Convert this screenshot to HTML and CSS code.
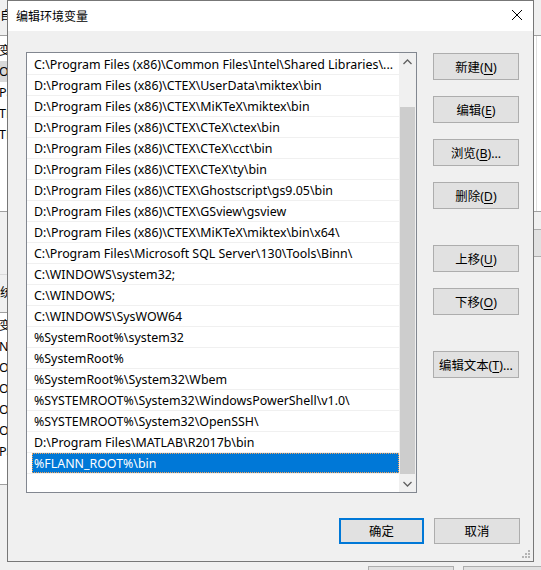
FILE: index.html
```html
<!DOCTYPE html>
<html lang="zh-CN">

<head>
  <meta charset="UTF-8">
  <title>编辑环境变量</title>
  <link rel="stylesheet" href="styles.css">
</head>

<body>
  <!-- window underneath the dialog -->
  <div class="behind">
    <div class="behind-left">
      <div class="bl-head">自</div>
      <div class="bl-list top">
        <div>变</div>
        <div class="hl">Or</div>
        <div>Pa</div>
        <div>TE</div>
        <div>TN</div>
      </div>
      <div class="bl-head second">统</div>
      <div class="bl-list bottom">
        <div>变</div>
        <div>N</div>
        <div>O</div>
        <div>O</div>
        <div>O</div>
        <div>O</div>
        <div>Pa</div>
      </div>
    </div>
    <div class="behind-right">
      <div class="br-top"></div>
      <div class="br-box"></div>
    </div>
    <div class="behind-btn b1"></div>
    <div class="behind-btn b2"></div>
  </div>

  <div class="dialog">
    <div class="titlebar">
      <span class="title">编辑环境变量</span>
      <svg class="close" width="12" height="12" viewBox="0 0 12 12">
        <path d="M1 1L11 11M11 1L1 11" stroke="#000" stroke-width="1" fill="none" />
      </svg>
    </div>

    <div class="content">
      <div class="listbox">
        <div class="rows">
          <div class="row"><span>C:\Program Files (x86)\Common Files\Intel\Shared Libraries\...</span></div>
          <div class="row"><span>D:\Program Files (x86)\CTEX\UserData\miktex\bin</span></div>
          <div class="row"><span>D:\Program Files (x86)\CTEX\MiKTeX\miktex\bin</span></div>
          <div class="row"><span>D:\Program Files (x86)\CTEX\CTeX\ctex\bin</span></div>
          <div class="row"><span>D:\Program Files (x86)\CTEX\CTeX\cct\bin</span></div>
          <div class="row"><span>D:\Program Files (x86)\CTEX\CTeX\ty\bin</span></div>
          <div class="row"><span>D:\Program Files (x86)\CTEX\Ghostscript\gs9.05\bin</span></div>
          <div class="row"><span>D:\Program Files (x86)\CTEX\GSview\gsview</span></div>
          <div class="row"><span>D:\Program Files (x86)\CTEX\MiKTeX\miktex\bin\x64\</span></div>
          <div class="row"><span>C:\Program Files\Microsoft SQL Server\130\Tools\Binn\</span></div>
          <div class="row"><span>C:\WINDOWS\system32;</span></div>
          <div class="row"><span>C:\WINDOWS;</span></div>
          <div class="row"><span>C:\WINDOWS\SysWOW64</span></div>
          <div class="row"><span>%SystemRoot%\system32</span></div>
          <div class="row"><span>%SystemRoot%</span></div>
          <div class="row"><span>%SystemRoot%\System32\Wbem</span></div>
          <div class="row"><span>%SYSTEMROOT%\System32\WindowsPowerShell\v1.0\</span></div>
          <div class="row"><span>%SYSTEMROOT%\System32\OpenSSH\</span></div>
          <div class="row"><span>D:\Program Files\MATLAB\R2017b\bin</span></div>
          <div class="row selected"><span>%FLANN_ROOT%\bin</span></div>
        </div>
        <div class="scrollbar">
          <div class="arrow">
            <svg width="9" height="6" viewBox="0 0 9 6"><path d="M0.5 5L4.5 1L8.5 5" stroke="#606060" stroke-width="1.3" fill="none" /></svg>
          </div>
          <div class="track">
            <div class="thumb"></div>
          </div>
          <div class="arrow">
            <svg width="9" height="6" viewBox="0 0 9 6"><path d="M0.5 1L4.5 5L8.5 1" stroke="#606060" stroke-width="1.3" fill="none" /></svg>
          </div>
        </div>
      </div>

      <div class="actions">
        <button class="btn">新建(<u>N</u>)</button>
        <button class="btn">编辑(<u>E</u>)</button>
        <button class="btn">浏览(<u>B</u>)...</button>
        <button class="btn">删除(<u>D</u>)</button>
        <button class="btn group">上移(<u>U</u>)</button>
        <button class="btn">下移(<u>O</u>)</button>
        <button class="btn group">编辑文本(<u>T</u>)...</button>
      </div>
    </div>

    <div class="footer">
      <button class="btn default">确定</button>
      <button class="btn">取消</button>
    </div>

    <svg class="grip" width="8" height="8" viewBox="0 0 8 8">
      <rect x="6" y="0" width="2" height="2" fill="#b4b4b4" />
      <rect x="3" y="3" width="2" height="2" fill="#b4b4b4" />
      <rect x="6" y="3" width="2" height="2" fill="#b4b4b4" />
      <rect x="0" y="6" width="2" height="2" fill="#b4b4b4" />
      <rect x="3" y="6" width="2" height="2" fill="#b4b4b4" />
      <rect x="6" y="6" width="2" height="2" fill="#b4b4b4" />
    </svg>
  </div>
</body>

</html>
```

FILE: styles.css
```css
body {
  margin: 0;
  width: 541px;
  height: 570px;
  overflow: hidden;
  position: relative;
  background: #f0f0f0;
  font-family: 'Noto Sans', 'Noto Sans CJK SC', sans-serif;
  font-size: 12px;
  color: #000;
}

/* --- window underneath --- */
.behind {
  position: absolute;
  inset: 0;
}

.behind-left {
  position: absolute;
  left: 0;
  top: 0;
  width: 8px;
  height: 570px;
  overflow: hidden;
  font-size: 12.5px;
}

.bl-head {
  height: 35px;
  line-height: 32px;
  border-bottom: 1px solid #a0a0a0;
  white-space: nowrap;
}

.bl-head.second {
  margin-top: 62px;
  height: 37px;
  line-height: 36px;
  border-top: 1px solid #dadada;
  border-bottom: 1px solid #a0a0a0;
}

.bl-list {
  background: #fff;
  white-space: nowrap;
}

.bl-list.top {
  height: 171px;
  padding-top: 4px;
  border-bottom: 1px solid #a0a0a0;
}

.bl-list.bottom {
  height: 169px;
  padding-top: 2px;
  border-bottom: 1px solid #a0a0a0;
}

.bl-list div {
  height: 21px;
  line-height: 21px;
  margin-left: -1px;
}

.bl-list .hl {
  background: #d9d9d9;
}

.behind-right {
  position: absolute;
  left: 534px;
  top: 0;
  width: 7px;
  height: 570px;
}

.br-top {
  height: 175px;
  margin-top: 35px;
  background: #fff;
  border-top: 1px solid #a0a0a0;
  border-bottom: 1px solid #a0a0a0;
  box-shadow: inset 2px 0 0 #fff, inset 3px 0 0 #e0e0e0;
}

.br-box {
  height: 26px;
  margin-top: 17px;
  background: #e1e1e1;
  border-top: 1px solid #adadad;
  border-bottom: 1px solid #adadad;
}

.behind-btn {
  position: absolute;
  top: 566px;
  height: 20px;
  background: #e1e1e1;
  border: 1px solid #adadad;
}

.behind-btn.b1 {
  left: 368px;
  width: 84px;
}

.behind-btn.b2 {
  left: 463px;
  width: 84px;
}

/* --- dialog --- */
.dialog {
  position: absolute;
  left: 7px;
  top: 0;
  width: 527px;
  height: 562px;
  box-sizing: border-box;
  border: 1px solid #777;
  background: #f0f0f0;
  display: flex;
  flex-direction: column;
}

.titlebar {
  height: 30px;
  background: #fff;
  display: flex;
  align-items: center;
  justify-content: space-between;
  padding: 0 10px 0 8px;
}

.title {
  font-family: 'Noto Sans CJK SC', sans-serif;
  font-size: 12px;
  margin-top: -1px;
}

.close {
  margin-top: -2px;
}

.content {
  display: flex;
  padding: 21px 13px 0 18px;
}

.listbox {
  width: 391px;
  height: 441px;
  box-sizing: border-box;
  border: 1px solid #828790;
  background: #fff;
  display: flex;
}

.rows {
  flex: 1;
  padding-top: 1px;
  overflow: hidden;
  font-size: 12.4px;
}

.row {
  height: 20px;
  border-bottom: 1px solid #f0f0f0;
  white-space: nowrap;
  overflow: hidden;
}

.row span {
  display: block;
  height: 20px;
  line-height: 21px;
  margin-left: 5px;
  padding-left: 2px;
}

.row.selected span {
  background: #0078d7;
  color: #fff;
  outline: 1px dotted #f3a35a;
  outline-offset: -1px;
}

.scrollbar {
  width: 17px;
  background: #f0f0f0;
  display: flex;
  flex-direction: column;
}

.arrow {
  height: 17px;
  display: flex;
  align-items: center;
  justify-content: center;
}

.track {
  flex: 1;
  padding-top: 37px;
}

.thumb {
  height: 367px;
  margin: 0 1px;
  background: #cdcdcd;
}

.actions {
  display: flex;
  flex-direction: column;
  gap: 16px;
  margin-left: 16px;
  padding-top: 1px;
}

.btn {
  width: 86px;
  height: 27px;
  padding: 0;
  box-sizing: border-box;
  background: #e1e1e1;
  border: 1px solid #adadad;
  font-family: 'Noto Sans', 'Noto Sans CJK SC', sans-serif;
  font-size: 12.4px;
  color: #000;
}

.btn u {
  text-underline-offset: 2px;
}

.btn.group {
  margin-top: 20px;
}

.footer {
  display: flex;
  justify-content: flex-end;
  gap: 10px;
  padding: 25px 13px 0;
}

.footer .btn {
  height: 26px;
}

.btn.default {
  width: 85px;
  border: 2px solid #0078d7;
}

.grip {
  position: absolute;
  right: 3px;
  bottom: 3px;
}
```
